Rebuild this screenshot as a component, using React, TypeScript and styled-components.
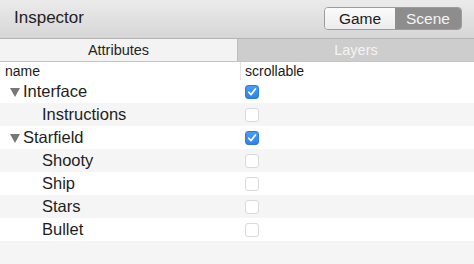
import React, { FC } from 'react'
import styled, { createGlobalStyle } from 'styled-components'

interface INode {
  name: string,
  depth: number,
  expandable: boolean,
  scrollable: boolean,
}

const nodes: INode[] = [
  { name: 'Interface', depth: 0, expandable: true, scrollable: true },
  { name: 'Instructions', depth: 1, expandable: false, scrollable: false },
  { name: 'Starfield', depth: 0, expandable: true, scrollable: true },
  { name: 'Shooty', depth: 1, expandable: false, scrollable: false },
  { name: 'Ship', depth: 1, expandable: false, scrollable: false },
  { name: 'Stars', depth: 1, expandable: false, scrollable: false },
  { name: 'Bullet', depth: 1, expandable: false, scrollable: false },
]

const GlobalStyle = createGlobalStyle`
  html, body {
    margin: 0;
    padding: 0;
    background: #ffffff;
  }
  body {
    font-family: "Liberation Sans", Arial, sans-serif;
    color: #1e1e1e;
  }
`

const Panel = styled.div`
  width: 474px;
  height: 264px;
  overflow: hidden;
  display: flex;
  flex-direction: column;
  background: #ffffff;
`

const TitleBar = styled.header`
  height: 39px;
  flex-shrink: 0;
  display: flex;
  align-items: center;
  justify-content: space-between;
  padding: 0 12px 0 14px;
  background: linear-gradient(#ebebeb, #d6d6d6);
  border-bottom: 1px solid #b4b4b4;
  box-sizing: border-box;
`

const Title = styled.h1`
  margin: 0 0 2px;
  font-size: 17px;
  font-weight: normal;
  color: #222;
`

const Segmented = styled.div`
  display: flex;
  height: 21px;
  border: 1px solid #9c9c9c;
  border-radius: 4px;
  overflow: hidden;
  margin-bottom: 1px;
`

const Segment = styled.div<{ $active: boolean }>`
  display: flex;
  align-items: center;
  justify-content: center;
  font-size: 15.5px;
  width: ${p => p.$active ? '66px' : '70px'};
  box-sizing: border-box;
  color: ${p => p.$active ? '#f4f4f4' : '#1a1a1a'};
  background: ${p => p.$active ? '#8d8d8d' : 'linear-gradient(#fbfbfb, #ececec)'};
`

const Tabs = styled.nav`
  height: 22px;
  flex-shrink: 0;
  display: grid;
  grid-template-columns: 238px 1fr;
  border-bottom: 1px solid #c4c4c4;
`

const Tab = styled.div<{ $active: boolean }>`
  display: flex;
  align-items: center;
  justify-content: center;
  font-size: 14.5px;
  color: ${p => p.$active ? '#252525' : '#f4f4f4'};
  background: ${p => p.$active ? '#f3f3f3' : '#cdcdcd'};
  border-right: ${p => p.$active ? '1px solid #bdbdbd' : 'none'};
`

const Row = styled.div<{ $striped?: boolean }>`
  height: 23px;
  flex-shrink: 0;
  display: grid;
  grid-template-columns: 240px 1fr;
  align-items: center;
  background: ${p => p.$striped ? '#f5f5f5' : '#ffffff'};
`

const HeaderRow = styled(Row)`
  height: 18px;
  font-size: 14px;
  color: #1a1a1a;
`

const HeaderCell = styled.div<{ $divider?: boolean }>`
  height: 100%;
  display: flex;
  align-items: center;
  padding-left: ${p => p.$divider ? '4px' : '5px'};
  border-left: ${p => p.$divider ? '1px solid #e2e2e2' : 'none'};
`

const NameCell = styled.div<{ $depth: number }>`
  display: flex;
  align-items: center;
  font-size: 16.5px;
  padding-left: ${p => p.$depth === 0 ? 10 : 42}px;
`

const Disclosure = styled.span`
  width: 0;
  height: 0;
  border-left: 5px solid transparent;
  border-right: 5px solid transparent;
  border-top: 9px solid #777;
  margin-right: 3px;
  margin-top: 1px;
`

const CheckCell = styled.div`
  display: flex;
  align-items: center;
  padding-left: 5px;
`

const Check = styled.span<{ $checked: boolean }>`
  width: 14px;
  height: 14px;
  box-sizing: border-box;
  border-radius: 3px;
  display: flex;
  align-items: center;
  justify-content: center;
  background: ${p => p.$checked ? 'linear-gradient(#4a9cf7, #2f82ec)' : '#ffffff'};
  border: 1px solid ${p => p.$checked ? '#2c7ce0' : '#dadada'};
`

const Tick: FC = () => (
  <svg width="10" height="10" viewBox="0 0 10 10">
    <path d="M1.8 5.2 L4 7.6 L8.4 2" fill="none" stroke="#fff" strokeWidth="1.7" strokeLinecap="round" strokeLinejoin="round" />
  </svg>
)

const App: FC = () => {
  return (
    <Panel>
      <GlobalStyle />
      <TitleBar>
        <Title>Inspector</Title>
        <Segmented>
          <Segment $active={false}>Game</Segment>
          <Segment $active={true}>Scene</Segment>
        </Segmented>
      </TitleBar>
      <Tabs>
        <Tab $active={true}>Attributes</Tab>
        <Tab $active={false}>Layers</Tab>
      </Tabs>
      <HeaderRow>
        <HeaderCell>name</HeaderCell>
        <HeaderCell $divider>scrollable</HeaderCell>
      </HeaderRow>
      {nodes.map((node, i) => (
        <Row key={node.name} $striped={i % 2 === 1}>
          <NameCell $depth={node.depth}>
            {node.expandable && <Disclosure />}
            {node.name}
          </NameCell>
          <CheckCell>
            <Check $checked={node.scrollable}>{node.scrollable && <Tick />}</Check>
          </CheckCell>
        </Row>
      ))}
      <Row $striped />
    </Panel>
  )
}

export default App
